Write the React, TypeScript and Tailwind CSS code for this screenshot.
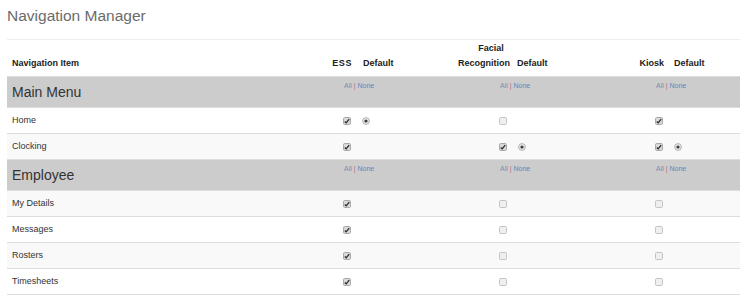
const cols = "grid grid-cols-[331px_20px_136px_20px_136px_20px_1fr]";

type Cell = { on: boolean; def?: boolean };
type Item = { name: string; cells: [Cell, Cell, Cell]; striped: boolean };
type Group = { title: string; items: Item[] };

const groups: Group[] = [
  {
    title: "Main Menu",
    items: [
      {
        name: "Home",
        striped: false,
        cells: [{ on: true, def: true }, { on: false }, { on: true }],
      },
      {
        name: "Clocking",
        striped: true,
        cells: [{ on: true }, { on: true, def: true }, { on: true, def: true }],
      },
    ],
  },
  {
    title: "Employee",
    items: [
      { name: "My Details", striped: true, cells: [{ on: true }, { on: false }, { on: false }] },
      { name: "Messages", striped: false, cells: [{ on: true }, { on: false }, { on: false }] },
      { name: "Rosters", striped: true, cells: [{ on: true }, { on: false }, { on: false }] },
      { name: "Timesheets", striped: false, cells: [{ on: true }, { on: false }, { on: false }] },
    ],
  },
];

function Check({ on }: { on: boolean }) {
  return (
    <svg width="8" height="8" viewBox="0 0 8 8" className="block">
      <rect
        x="0.5"
        y="0.5"
        width="7"
        height="7"
        rx="1.2"
        fill={on ? "#d9d9d9" : "#efefef"}
        stroke={on ? "#a9a9a9" : "#c4c4c4"}
      />
      {on && (
        <path d="M1.8 4.6 L3.2 5.9 L6.2 2.2" fill="none" stroke="#2a2a2a" strokeWidth="1.3" />
      )}
    </svg>
  );
}

function Radio() {
  return (
    <svg width="8" height="8" viewBox="0 0 8 8" className="block">
      <circle cx="4" cy="4" r="3.4" fill="#ececec" stroke="#a8a8a8" strokeWidth="0.9" />
      <circle cx="4" cy="4" r="1.6" fill="#3a3a3a" />
    </svg>
  );
}

function AllNone() {
  return (
    <span className="col-span-2 whitespace-nowrap pl-[6px] pt-[5px] text-[7px] leading-[8px]">
      <span className="text-[#7d8db0]">All</span>
      <span className="text-[#b86c6c]"> | </span>
      <span className="text-[#5c86c4]">None</span>
    </span>
  );
}

export default function App() {
  return (
    <div className="min-h-[297px] bg-white pl-[7px] font-['Liberation_Sans',Arial,sans-serif] text-[#333]">
      <div className="h-[39px] pt-[6px] text-[15.5px] leading-[20px] text-[#6b6b6b]">
        Navigation Manager
      </div>
      <div className="border-t border-[#eeeeee]">
        <div className={`${cols} h-[36px] items-end pb-[7px] text-[9px] font-bold leading-[11px] text-[#222]`}>
          <div className="pl-[5px]">Navigation Item</div>
          <div className="flex justify-end whitespace-nowrap pr-[6px] tracking-[0.6px]">ESS</div>
          <div className="pl-[5px]">Default</div>
          <div className="flex justify-end whitespace-nowrap pr-[4px]">
            <div className="text-center">
              <div className="pl-[14px]">Facial</div>
              <div className="mt-[4px]">Recognition</div>
            </div>
          </div>
          <div className="pl-[3px]">Default</div>
          <div className="flex justify-end whitespace-nowrap pr-[6px]">Kiosk</div>
          <div className="pl-[4px]">Default</div>
        </div>

        {groups.map((g) => (
          <div key={g.title}>
            <div className={`${cols} h-[31px] border-t border-[#dddddd] bg-[#cccccc]`}>
              <div className="flex items-center pl-[5px] text-[14px] leading-[16px] text-[#333]">
                {g.title}
              </div>
              <AllNone />
              <AllNone />
              <AllNone />
            </div>
            {g.items.map((it) => (
              <div
                key={it.name}
                className={`${cols} h-[26px] items-center border-t border-[#dddddd] text-[9px] ${
                  it.striped ? "bg-[#f9f9f9]" : "bg-white"
                }`}
              >
                <div className="pl-[5px]">{it.name}</div>
                {it.cells.map((c, i) => (
                  <div key={i} className="contents">
                    <div className="pl-[5px]">
                      <Check on={c.on} />
                    </div>
                    <div className="pl-1">{c.def && <Radio />}</div>
                  </div>
                ))}
              </div>
            ))}
          </div>
        ))}
        <div className="border-t border-[#dddddd]" />
      </div>
    </div>
  );
}
